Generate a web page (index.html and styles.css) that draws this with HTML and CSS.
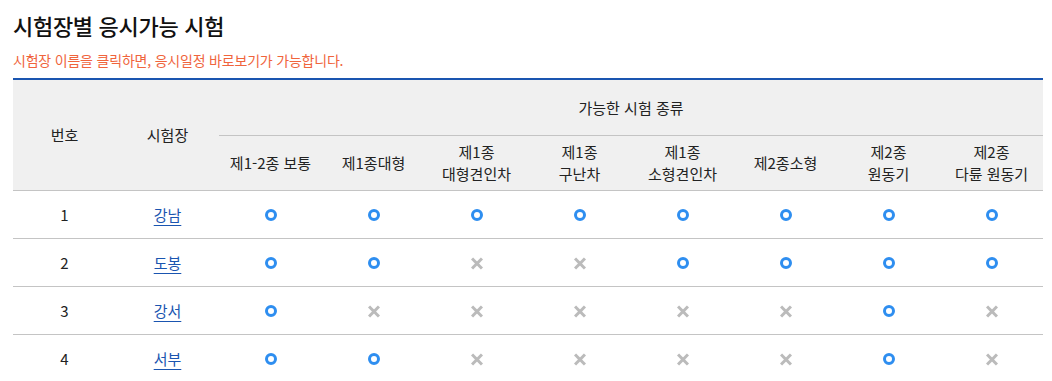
FILE: index.html
```html
<!DOCTYPE html>
<html lang="ko">
<head>
<meta charset="utf-8">
<link rel="stylesheet" href="styles.css">
</head>
<body>
<div class="wrap">
  <h2 class="title">시험장별 응시가능 시험</h2>
  <p class="note">시험장 이름을 클릭하면, 응시일정 바로보기가 가능합니다.</p>
  <table class="tbl">
    <colgroup>
      <col><col><col><col><col><col><col><col><col><col>
    </colgroup>
    <thead>
      <tr class="h1">
        <th rowspan="2">번호</th>
        <th rowspan="2">시험장</th>
        <th colspan="8" class="group">가능한 시험 종류</th>
      </tr>
      <tr class="h2">
        <th>제1-2종 보통</th>
        <th>제1종대형</th>
        <th>제1종<br>대형견인차</th>
        <th>제1종<br>구난차</th>
        <th>제1종<br>소형견인차</th>
        <th>제2종소형</th>
        <th>제2종<br>원동기</th>
        <th>제2종<br>다륜 원동기</th>
      </tr>
    </thead>
    <tbody>
      <tr>
        <td>1</td><td><a href="#">강남</a></td>
        <td><i class="o"></i></td><td><i class="o"></i></td><td><i class="o"></i></td><td><i class="o"></i></td>
        <td><i class="o"></i></td><td><i class="o"></i></td><td><i class="o"></i></td><td><i class="o"></i></td>
      </tr>
      <tr>
        <td>2</td><td><a href="#">도봉</a></td>
        <td><i class="o"></i></td><td><i class="o"></i></td><td><i class="x"></i></td><td><i class="x"></i></td>
        <td><i class="o"></i></td><td><i class="o"></i></td><td><i class="o"></i></td><td><i class="o"></i></td>
      </tr>
      <tr>
        <td>3</td><td><a href="#">강서</a></td>
        <td><i class="o"></i></td><td><i class="x"></i></td><td><i class="x"></i></td><td><i class="x"></i></td>
        <td><i class="x"></i></td><td><i class="x"></i></td><td><i class="o"></i></td><td><i class="x"></i></td>
      </tr>
      <tr>
        <td>4</td><td><a href="#">서부</a></td>
        <td><i class="o"></i></td><td><i class="o"></i></td><td><i class="x"></i></td><td><i class="x"></i></td>
        <td><i class="x"></i></td><td><i class="x"></i></td><td><i class="o"></i></td><td><i class="x"></i></td>
      </tr>
    </tbody>
  </table>
</div>
</body>
</html>
```
FILE: styles.css
```css
html, body {
  margin: 0;
  padding: 0;
  background: #fff;
}
body {
  font-family: "Noto Sans CJK KR", "Noto Sans", sans-serif;
  color: #222;
}
.wrap {
  padding: 0 9px 0 13px;
}
.title {
  margin: 0;
  padding-top: 9px;
  font-size: 22px;
  line-height: 32px;
  font-weight: 500;
  color: #111;
  letter-spacing: -0.3px;
}
.note {
  margin: 10px 0 0;
  font-size: 14px;
  line-height: 18px;
  color: #f0643c;
  letter-spacing: -0.2px;
}
.tbl {
  margin-top: 9px;
  width: 1030px;
  border-collapse: collapse;
  table-layout: fixed;
  border-top: 2px solid #1a55b0;
  font-size: 15px;
}
.tbl col { width: 103px; }
.tbl th {
  background: #f0f0f0;
  font-weight: 400;
  color: #222;
  line-height: 22px;
  padding: 0;
  text-align: center;
}
.tbl .h1 th { height: 55px; }
.tbl .h1 th[rowspan] { border-bottom: 1px solid #c4c4c4; }
.tbl .h1 .group { border-bottom: 1px solid #c4c4c4; }
.tbl .h2 th { height: 54px; border-bottom: 1px solid #c4c4c4; }
.tbl td {
  height: 47px;
  padding: 0;
  text-align: center;
  border-bottom: 1px solid #c4c4c4;
  line-height: 20px;
  color: #222;
}
.tbl a {
  color: #1a55b0;
  text-decoration: underline;
  text-underline-offset: 4px;
}
.o, .x {
  display: inline-block;
  vertical-align: middle;
  width: 12px;
  height: 12px;
  position: relative;
  top: -1px;
}
.o {
  box-sizing: border-box;
  border: 3px solid #2e8ef0;
  border-radius: 50%;
}
.x::before, .x::after {
  content: "";
  position: absolute;
  left: -1px;
  top: 4.5px;
  width: 14px;
  height: 3px;
  background: #bbbbbb;
  transform: rotate(45deg);
}
.x::after { transform: rotate(-45deg); }
```
